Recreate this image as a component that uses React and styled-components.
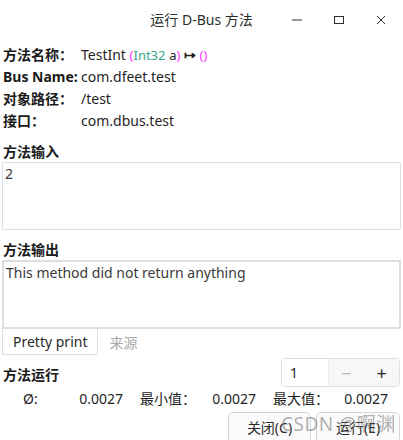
import React from "react";
import styled, { createGlobalStyle } from "styled-components";

const GlobalStyle = createGlobalStyle`
	html, body {
		margin: 0;
		padding: 0;
		background: #ffffff;
	}
	body {
		font-family: "Noto Sans", "Noto Sans CJK SC", sans-serif;
		font-size: 14px;
		color: #1f1f1f;
	}
`

const Window = styled.div`
	position: relative;
	width: 403px;
	height: 440px;
	overflow: hidden;
	display: flex;
	flex-direction: column;
	background: #fff;
`

const TitleBar = styled.div`
	height: 40px;
	display: grid;
	grid-template-columns: 1fr auto 1fr;
	align-items: center;
`

const Title = styled.div`
	grid-column: 2;
	color: #2e2e2e;
	font-size: 14px;
	line-height: 20px;
`

const Controls = styled.div`
	grid-column: 3;
	justify-self: end;
	display: flex;
	margin-right: 1px;
`

const ControlButton = styled.div`
	width: 42px;
	height: 40px;
	display: flex;
	align-items: center;
	justify-content: center;
	color: #2e2e2e;
`

const Content = styled.div`
	padding: 3px 2px 0 2px;
	display: flex;
	flex-direction: column;
`

const InfoGrid = styled.div`
	display: grid;
	grid-template-columns: 78px 1fr;
	grid-auto-rows: 22px;
	align-items: center;
	padding-left: 1px;
`

const InfoLabel = styled.div`
	font-weight: 700;
	color: #1a1a1a;
	white-space: nowrap;
`

const InfoValue = styled.div`
	color: #1f1f1f;
	white-space: nowrap;
`

const Sig = styled.span`
	font-size: ${(p) => p.size || 13}px;
	font-weight: ${(p) => (p.bold ? 700 : 400)};
	color: ${(p) => p.color || "#1f1f1f"};
`

const SectionLabel = styled.div`
	font-weight: 700;
	line-height: 20px;
	margin-top: ${(p) => p.top || 10}px;
	padding-left: 1px;
	color: #1a1a1a;
`

const TextBox = styled.div`
	height: ${(p) => p.h}px;
	box-sizing: border-box;
	border: ${(p) => p.bw || 1}px solid #dcdee2;
	padding: 1px 2px;
	color: #3a3a3a;
	line-height: 20px;
`

const Tabs = styled.div`
	display: flex;
	align-items: stretch;
	height: 26px;
`

const Tab = styled.div`
	display: flex;
	align-items: center;
	padding: 0 10px;
	color: ${(p) => (p.active ? "#2a2a2a" : "#a9a9a9")};
	border: 1px solid ${(p) => (p.active ? "#dcdee2" : "transparent")};
	border-top: none;
`

const RunRow = styled.div`
	display: flex;
	justify-content: space-between;
	align-items: center;
	margin-top: 3px;
	padding-left: 1px;
`

const RunLabel = styled.div`
	font-weight: 700;
	color: #1a1a1a;
	margin-top: 2px;
`

const Spin = styled.div`
	display: flex;
	width: 119px;
	height: 29px;
	box-sizing: border-box;
	border: 1px solid #dcdee2;
	border-radius: 4px;
	overflow: hidden;
	margin-right: 1px;
`

const SpinValue = styled.div`
	width: 46px;
	padding-left: 8px;
	box-sizing: border-box;
	display: flex;
	align-items: center;
	color: #1f1f1f;
	background: #fff;
`

const SpinButton = styled.div`
	flex: 1;
	display: flex;
	align-items: center;
	justify-content: center;
	font-size: 18px;
	background: #f7f7f8;
	border-left: 1px solid ${(p) => (p.divider ? "#e8e9eb" : "transparent")};
	color: ${(p) => (p.disabled ? "#b8b8b8" : "#2a2a2a")};
`

const Stats = styled.div`
	display: grid;
	grid-template-columns: 100px 116px 115px;
	column-gap: 17px;
	padding-left: 21px;
	line-height: 20px;
	margin-top: 2px;
`

const Stat = styled.div`
	display: flex;
	justify-content: space-between;
	white-space: nowrap;
	color: #1f1f1f;
`

const Buttons = styled.div`
	display: flex;
	justify-content: flex-end;
	gap: 5px;
	margin-top: 3px;
	padding-right: 1px;
`

const Button = styled.div`
	width: ${(p) => p.w}px;
	height: 32px;
	box-sizing: border-box;
	border: 1px solid #d6d7da;
	border-radius: 5px;
	background: #fbfbfb;
	display: flex;
	align-items: center;
	justify-content: center;
	color: #2a2a2a;
	padding-bottom: 3px;
`

const Watermark = styled.div`
	position: absolute;
	left: 281px;
	top: 409px;
	font-size: 19px;
	color: rgba(110, 110, 110, 0.55);
	letter-spacing: 0.5px;
	pointer-events: none;
	white-space: nowrap;
`

function MinIcon() {
	return (
		<svg width="12" height="12" viewBox="0 0 12 12">
			<path d="M1 6h10" stroke="#2e2e2e" strokeWidth="1" />
		</svg>
	)
}

function MaxIcon() {
	return (
		<svg width="12" height="12" viewBox="0 0 12 12">
			<rect x="1.5" y="2.5" width="9" height="7" fill="none" stroke="#2e2e2e" strokeWidth="1" />
		</svg>
	)
}

function CloseIcon() {
	return (
		<svg width="12" height="12" viewBox="0 0 12 12">
			<path d="M2 2l8 8M10 2l-8 8" stroke="#2e2e2e" strokeWidth="1" />
		</svg>
	)
}

export default function App() {
	const stats = [
		{ label: "Ø:", value: "0.0027" },
		{ label: "最小值：", value: "0.0027" },
		{ label: "最大值：", value: "0.0027" },
	]
	return (
		<Window>
			<GlobalStyle />
			<TitleBar>
				<Title>运行 D-Bus 方法</Title>
				<Controls>
					<ControlButton><MinIcon /></ControlButton>
					<ControlButton><MaxIcon /></ControlButton>
					<ControlButton><CloseIcon /></ControlButton>
				</Controls>
			</TitleBar>
			<Content>
				<InfoGrid>
					<InfoLabel>方法名称：</InfoLabel>
					<InfoValue>
						TestInt <Sig color="#ff33ff">(</Sig>
						<Sig color="#3aa58a">Int32</Sig> <Sig>a</Sig>
						<Sig color="#ff33ff">)</Sig> <Sig size={14} bold>↦</Sig> <Sig color="#ff33ff">()</Sig>
					</InfoValue>
					<InfoLabel>Bus Name:</InfoLabel>
					<InfoValue>com.dfeet.test</InfoValue>
					<InfoLabel>对象路径：</InfoLabel>
					<InfoValue>/test</InfoValue>
					<InfoLabel>接口：</InfoLabel>
					<InfoValue>com.dbus.test</InfoValue>
				</InfoGrid>
				<SectionLabel top={11}>方法输入</SectionLabel>
				<TextBox h={68}>2</TextBox>
				<SectionLabel top={10}>方法输出</SectionLabel>
				<TextBox h={69} bw={2}>This method did not return anything</TextBox>
				<Tabs>
					<Tab active>Pretty print</Tab>
					<Tab>来源</Tab>
				</Tabs>
				<RunRow>
					<RunLabel>方法运行</RunLabel>
					<Spin>
						<SpinValue>1</SpinValue>
						<SpinButton disabled divider>−</SpinButton>
						<SpinButton>+</SpinButton>
					</Spin>
				</RunRow>
				<Stats>
					{stats.map((s) => (
						<Stat key={s.label}>
							<span>{s.label}</span>
							<span>{s.value}</span>
						</Stat>
					))}
				</Stats>
				<Buttons>
					<Button w={83}>关闭(C)</Button>
					<Button w={84}>运行(E)</Button>
				</Buttons>
			</Content>
			<Watermark>CSDN @啊渊</Watermark>
		</Window>
	)
}
